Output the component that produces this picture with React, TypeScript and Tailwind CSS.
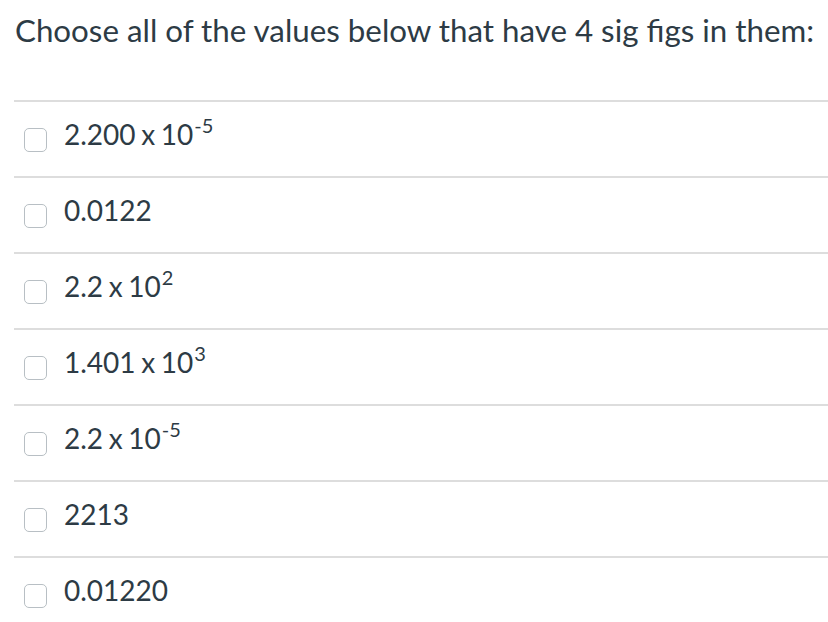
import React from "react";

const items: { base: string; sup?: string }[] = [
  { base: "2.200 x 10", sup: "-5" },
  { base: "0.0122" },
  { base: "2.2 x 10", sup: "2" },
  { base: "1.401 x 10", sup: "3" },
  { base: "2.2 x 10", sup: "-5" },
  { base: "2213" },
  { base: "0.01220" },
];

export default function App() {
  return (
    <div
      className="w-[828px] h-[622px] overflow-hidden bg-white text-[#2d3b45]"
      style={{ fontFamily: "Lato, 'Open Sans', sans-serif" }}
    >
      <div className="pl-[15px] pt-[10px] h-[100px] text-[31.3px] leading-[40px] whitespace-nowrap">
        Choose all of the values below that have 4 sig figs in them:
      </div>
      <div className="ml-[14px]">
        {items.map((it, i) => (
          <div
            key={i}
            className="h-[76px] border-t-2 border-[#dddddd] flex items-start"
          >
            <span className="ml-[10px] mt-[26px] w-[23px] h-[24px] rounded-[5px] border border-[#b8bfc4] bg-white shrink-0" />
            <span className="ml-[17px] mt-[18px] text-[28px] leading-none whitespace-nowrap [word-spacing:-1.5px]">
              {it.base}
              {it.sup && (
                <sup className="relative text-[20px] leading-none align-baseline -top-[12px] ml-[1px]">
                  {it.sup}
                </sup>
              )}
            </span>
          </div>
        ))}
      </div>
    </div>
  );
}
